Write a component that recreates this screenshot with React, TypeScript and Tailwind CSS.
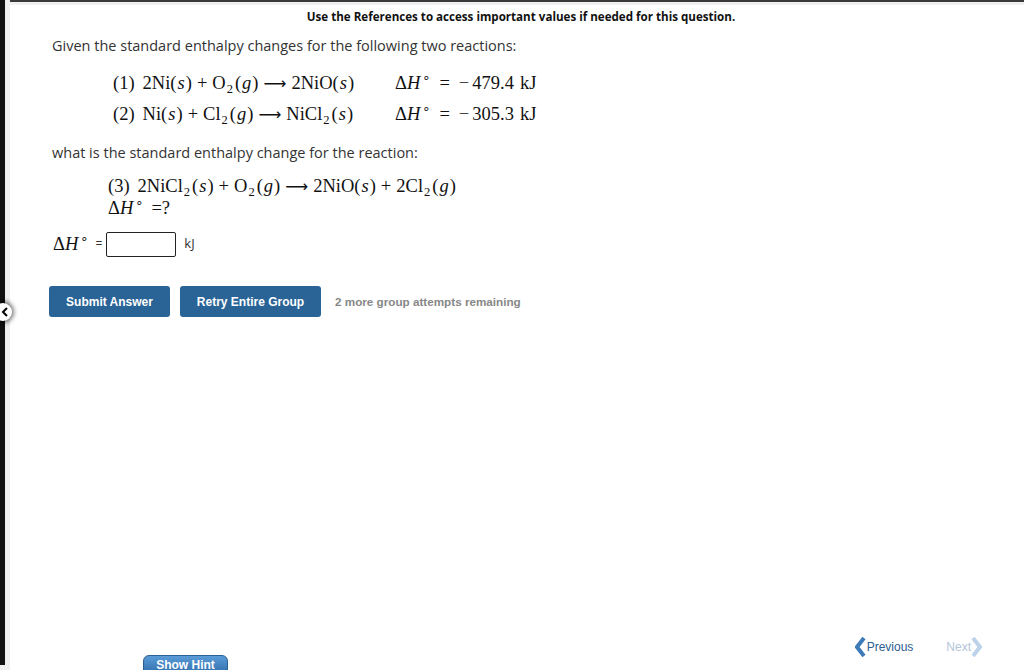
import React from 'react';

const serif = { fontFamily: '"Liberation Serif", "DejaVu Serif", serif' };

function Sub({ children }: { children: React.ReactNode }) {
  return <span className="text-[12.5px] relative top-[4px] ml-[1px] mr-[2px]">{children}</span>;
}

function I({ children }: { children: React.ReactNode }) {
  return <span className="italic mx-[1px]">{children}</span>;
}

function Op({ children }: { children: React.ReactNode }) {
  return <span className="mx-[5px]">{children}</span>;
}

function Eq() {
  return <span className="mx-[9px]">=</span>;
}

function Arrow() {
  return <span className="mx-[5px] font-['DejaVu_Sans'] text-[16px]">⟶</span>;
}

function DeltaH() {
  return (
    <span>
      Δ<span className="italic">H</span>
      <span className="text-[13px] leading-none relative -top-[7px] ml-[2px] font-['DejaVu_Sans']">∘</span>
    </span>
  );
}

export default function App() {
  return (
    <div className="w-[1024px] h-[670px] bg-white overflow-hidden relative flex" style={{ fontFamily: '"Open Sans", sans-serif' }}>
      <div className="w-[5px] h-full flex flex-col">
        <div className="h-[665px] bg-[#111]" />
        <div className="flex-1 bg-[#efefef]" />
      </div>
      <div className="w-[5px] h-full bg-[#efefef]" />
      <div className="flex-1 flex flex-col">
        <div className="h-[2px] bg-[#3a3a3a]" />
        <div className="h-[3px] bg-[#f0f0f0]" />
        <div className="pt-[3px] text-center text-[11.6px] leading-[18px] font-bold text-[#111] pl-[8px]">
          Use the References to access important values if needed for this question.
        </div>

        <div className="pl-[42px] mt-[10px] text-[14.5px] leading-[20px] text-[#333]">
          Given the standard enthalpy changes for the following two reactions:
        </div>

        <div className="pl-[103px] mt-[13px] text-[18.5px] text-[#111] leading-[29px]" style={serif}>
          <div className="flex">
            <div className="w-[282px]">
              (1)<span className="ml-[8px]" />2Ni(<I>s</I>)<Op>+</Op>O<Sub>2</Sub>(<I>g</I>)<Arrow />2NiO(<I>s</I>)
            </div>
            <div>
              <DeltaH /><Eq />−<span className="ml-[3px]">479.4</span><span className="ml-[6px]">kJ</span>
            </div>
          </div>
          <div className="flex">
            <div className="w-[282px]">
              (2)<span className="ml-[8px]" />Ni(<I>s</I>)<Op>+</Op>Cl<Sub>2</Sub>(<I>g</I>)<Arrow />NiCl<Sub>2</Sub>(<I>s</I>)
            </div>
            <div>
              <DeltaH /><Eq />−<span className="ml-[3px]">305.3</span><span className="ml-[6px]">kJ</span>
            </div>
          </div>
        </div>

        <div className="pl-[42px] mt-[12px] text-[14.5px] leading-[20px] text-[#333]">
          what is the standard enthalpy change for the reaction:
        </div>

        <div className="pl-[98px] mt-[13px] text-[18.5px] text-[#111] leading-[20px]" style={serif}>
          <div>
            (3)<span className="ml-[8px]" />2NiCl<Sub>2</Sub>(<I>s</I>)<Op>+</Op>O<Sub>2</Sub>(<I>g</I>)<Arrow />2NiO(<I>s</I>)<Op>+</Op>2Cl<Sub>2</Sub>(<I>g</I>)
          </div>
          <div>
            <DeltaH /><span className="ml-[8px]">=?</span>
          </div>
        </div>

        <div className="pl-[43px] mt-[13px] flex items-center text-[#111] h-[26px]">
          <span className="text-[18.5px] leading-[26px]" style={serif}>
            <DeltaH />
          </span>
          <span className="text-[12px] ml-[7px] text-[#333]">=</span>
          <div className="ml-[4px] w-[70px] h-[25px] border border-[#222] rounded-[2px] bg-white" />
          <span className="ml-[8px] text-[13px] text-[#333]">kJ</span>
        </div>

        <div className="pl-[39px] mt-[29px] flex items-center gap-[10px]" style={{ fontFamily: '"Liberation Sans", Arial, sans-serif' }}>
          <button className="w-[121px] h-[31px] rounded-[3px] bg-[#2a6497] text-white text-[12px] font-bold">
            Submit Answer
          </button>
          <button className="w-[141px] h-[31px] rounded-[3px] bg-[#2a6497] text-white text-[12px] font-bold">
            Retry Entire Group
          </button>
          <span className="ml-[4px] text-[11.7px] font-bold text-[#888]">2 more group attempts remaining</span>
        </div>

        <div className="flex-1" />

        <div className="flex items-end justify-end pr-[41px] h-[14px]" style={{ fontFamily: '"Liberation Sans", Arial, sans-serif' }}>
          <div className="flex items-center -mb-[3px]">
            <svg width="11" height="20" viewBox="0 0 11 20">
              <path d="M9 1 L2 10 L9 19" fill="none" stroke="#3d7bb8" strokeWidth="4" strokeLinejoin="miter" />
            </svg>
            <span className="ml-[1px] text-[12px] text-[#2b5d8f]">Previous</span>
            <span className="ml-[33px] text-[12px] text-[#b3c5da]">Next</span>
            <svg width="12" height="20" viewBox="0 0 12 20">
              <path d="M2 1 L9 10 L2 19" fill="none" stroke="#bcd3ea" strokeWidth="4" strokeLinejoin="miter" />
            </svg>
          </div>
        </div>
        <div className="pl-[133px] h-[15px] flex items-start mt-[1px]" style={{ fontFamily: '"Liberation Sans", Arial, sans-serif' }}>
          <div className="w-[85px] h-[20px] rounded-t-[6px] bg-gradient-to-b from-[#5a9bd8] to-[#2f6eab] border border-[#2a5f93] text-white text-[12px] font-bold text-center leading-[18px]">
            Show Hint
          </div>
        </div>
      </div>

      <div className="absolute left-[-6px] top-[303px] w-[18px] h-[18px] rounded-full bg-white shadow-[0_0_4px_2px_rgba(0,0,0,0.5)] flex items-center justify-end pr-[3px]">
        <svg width="8" height="10" viewBox="0 0 8 10">
          <path d="M6 1 L2 5 L6 9" fill="none" stroke="#000" strokeWidth="2" />
        </svg>
      </div>
    </div>
  );
}
